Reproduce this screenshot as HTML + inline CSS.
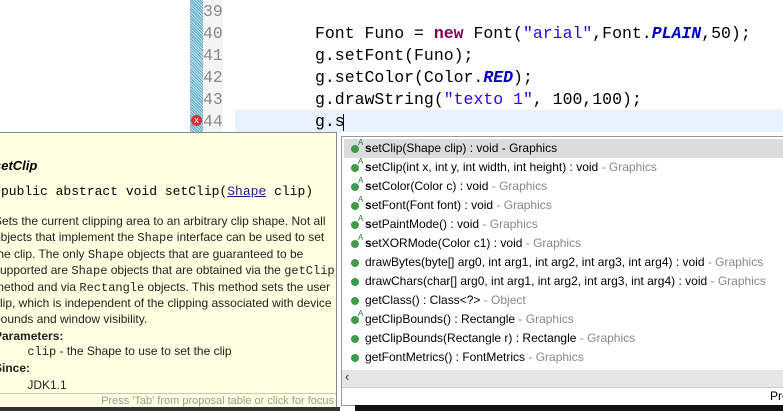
<!DOCTYPE html>
<html><head><style>
body{margin:0;width:783px;height:411px;overflow:hidden;background:#fff;position:relative;font-family:"Liberation Sans",sans-serif}
.a{position:absolute}
.code{font-family:"Liberation Mono",monospace;font-size:16.5px;color:#000;white-space:pre}
.ln{font-family:"Liberation Mono",monospace;font-size:16.5px;color:#888;}
.kw{color:#7f0055;font-weight:bold}
.st{color:#2a00ff}
.cn{color:#0000c0;font-weight:bold;font-style:italic}
.jd{font-size:12px;color:#222;line-height:16.4px;white-space:nowrap}
.m{font-family:"Liberation Mono",monospace;font-size:12px;line-height:0}
.row{position:absolute;left:345px;height:19px;width:436px;font-size:12px;line-height:19px;white-space:nowrap;color:#000}
.row i{font-style:normal;color:#888}
.dot{display:inline-block;width:8px;height:8px;border-radius:50%;background:#3f9b4a;margin:0 6px 0 6px;vertical-align:-1px;position:relative}
.dot.A:after{content:"A";position:absolute;left:7px;top:-6px;font-size:8px;color:#2a7a3a;line-height:8px}
</style></head><body>
<div class="a" style="left:190px;top:0;width:13px;height:132px;background:repeating-linear-gradient(45deg,#5aa8c8 0 1px,#c8e4ee 1px 2px)"></div>
<div class="a" style="left:203px;top:0;width:20px;height:132px;background:#f4f4f4"></div>
<div class="a" style="left:235px;top:110px;width:548px;height:22px;background:#e8f2fe"></div>
<div class="a ln" style="left:203px;top:1px;line-height:22px">39<br>40<br>41<br>42<br>43<br>44</div>
<div class="a" style="left:191px;top:115px;width:11px;height:11px;border-radius:50%;background:#d8323a;color:#fff;font-size:9px;line-height:11px;text-align:center">x</div>
<div class="a code" style="left:315px;top:23px;line-height:22px">Font Funo = <span class="kw">new</span> Font(<span class="st">"arial"</span>,Font.<span class="cn">PLAIN</span>,50);
g.setFont(Funo);
g.setColor(Color.<span class="cn">RED</span>);
g.drawString(<span class="st">"texto 1"</span>, 100,100);
g.s</div>
<div class="a" style="left:343px;top:114px;width:1px;height:17px;background:#000"></div>

<div class="a" style="left:-1px;top:132px;width:336px;height:274px;background:#ffffe1;border:1px solid #8a8a8a;overflow:hidden">
<div class="a" style="left:-6px;top:25px;font-size:13px;font-weight:bold;font-style:italic">setClip</div>
<div class="a m" style="left:1px;top:59px;font-size:13px">public abstract void setClip(<span style="color:#1a1a8a;text-decoration:underline">Shape</span> clip)</div>
<div class="a jd" style="left:-6px;top:80px">Sets the current clipping area to an arbitrary clip shape. Not all<br>objects that implement the <span class="m">Shape</span> interface can be used to set<br>the clip. The only <span class="m">Shape</span> objects that are guaranteed to be<br>supported are <span class="m">Shape</span> objects that are obtained via the <span class="m">getClip</span><br>method and via <span class="m">Rectangle</span> objects. This method sets the user<br>clip, which is independent of the clipping associated with device<br>bounds and window visibility.<br><b>Parameters:</b></div>
<div class="a jd" style="left:-6px;top:210px;line-height:17px">&nbsp;&nbsp;&nbsp;&nbsp;&nbsp;&nbsp;&nbsp;&nbsp;&nbsp;&nbsp;<span class="m">clip</span> - the Shape to use to set the clip<br><b>Since:</b><br>&nbsp;&nbsp;&nbsp;&nbsp;&nbsp;&nbsp;&nbsp;&nbsp;&nbsp;&nbsp;JDK1.1</div>
<div class="a" style="left:0;top:260px;width:336px;height:1px;background:#c8c8b0"></div>
<div class="a" style="right:2px;top:262px;font-size:11px;color:#999">Press 'Tab' from proposal table or click for focus</div>
</div>
<div class="a" style="left:0;top:407px;width:340px;height:4px;background:#333"></div>

<div class="a" style="left:341px;top:136px;width:442px;height:268px;background:#fff;border:1px solid #999"></div>
<div class="a" style="left:344px;top:139px;width:439px;height:19px;background:#dcdcdc"></div>
<div class="row" style="top:139px"><span class="dot A"></span><b>s</b>etClip(Shape clip) : void - Graphics</div>
<div class="row" style="top:158px"><span class="dot A"></span><b>s</b>etClip(int x, int y, int width, int height) : void <i>- Graphics</i></div>
<div class="row" style="top:177px"><span class="dot A"></span><b>s</b>etColor(Color c) : void <i>- Graphics</i></div>
<div class="row" style="top:196px"><span class="dot A"></span><b>s</b>etFont(Font font) : void <i>- Graphics</i></div>
<div class="row" style="top:215px"><span class="dot A"></span><b>s</b>etPaintMode() : void <i>- Graphics</i></div>
<div class="row" style="top:234px"><span class="dot A"></span><b>s</b>etXORMode(Color c1) : void <i>- Graphics</i></div>
<div class="row" style="top:253px"><span class="dot"></span>drawBytes(byte[] arg0, int arg1, int arg2, int arg3, int arg4) : void <i>- Graphics</i></div>
<div class="row" style="top:272px"><span class="dot"></span>drawChars(char[] arg0, int arg1, int arg2, int arg3, int arg4) : void <i>- Graphics</i></div>
<div class="row" style="top:291px"><span class="dot"></span>getClass() : Class&lt;?&gt; <i>- Object</i></div>
<div class="row" style="top:310px"><span class="dot A"></span>getClipBounds() : Rectangle <i>- Graphics</i></div>
<div class="row" style="top:329px"><span class="dot"></span>getClipBounds(Rectangle r) : Rectangle <i>- Graphics</i></div>
<div class="row" style="top:348px"><span class="dot"></span>getFontMetrics() : FontMetrics <i>- Graphics</i></div>
<div class="a" style="left:342px;top:370px;width:441px;height:17px;background:#e6e6e6"></div>
<div class="a" style="left:345px;top:369px;font-size:13px;color:#333">‹</div>
<div class="a" style="left:342px;top:387px;width:441px;height:1px;background:#ccc"></div>
<div class="a" style="left:770px;top:389px;font-size:12px;color:#000">Pre</div>
<div class="a" style="left:355px;top:405px;width:428px;height:6px;background:#111"></div>
</body></html>
